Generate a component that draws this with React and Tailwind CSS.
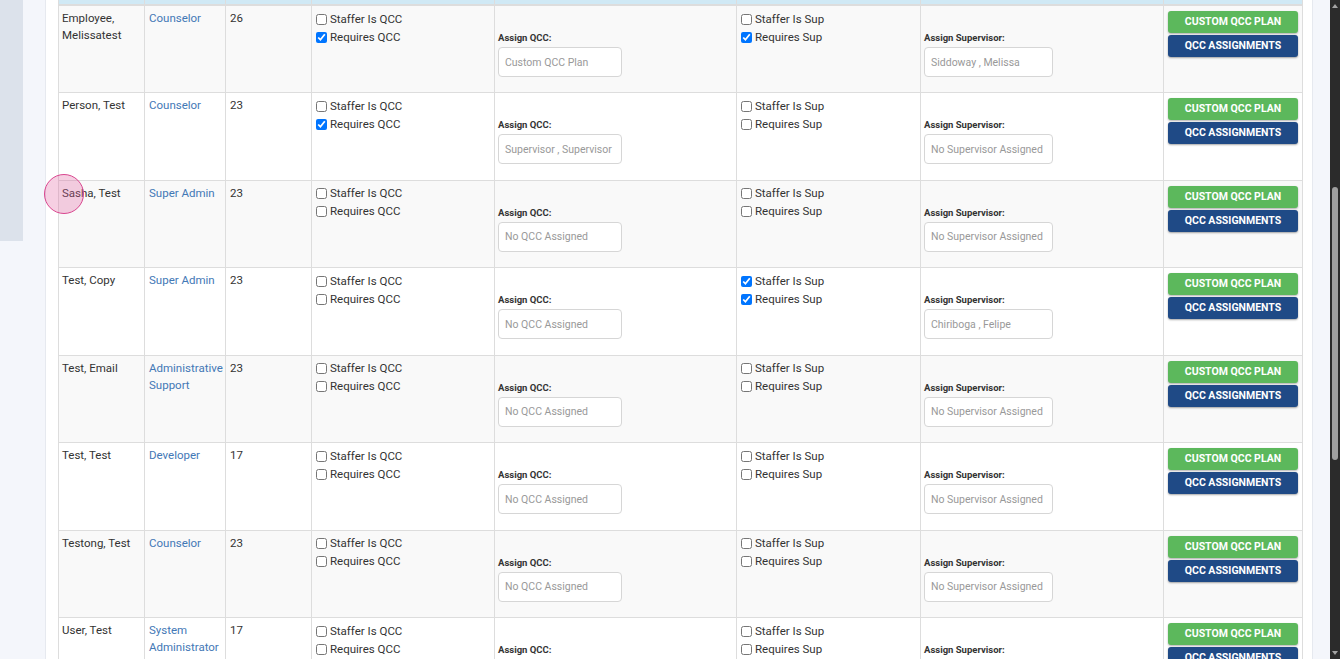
import React from 'react';

const rows = [
    { name: ['Employee,', 'Melissatest'], role: ['Counselor'], count: 26, isQcc: false, reqQcc: true, qcc: 'Custom QCC Plan', isSup: false, reqSup: true, sup: 'Siddoway , Melissa' },
    { name: ['Person, Test'], role: ['Counselor'], count: 23, isQcc: false, reqQcc: true, qcc: 'Supervisor , Supervisor', isSup: false, reqSup: false, sup: 'No Supervisor Assigned' },
    { name: ['Sasha, Test'], role: ['Super Admin'], count: 23, isQcc: false, reqQcc: false, qcc: 'No QCC Assigned', isSup: false, reqSup: false, sup: 'No Supervisor Assigned' },
    { name: ['Test, Copy'], role: ['Super Admin'], count: 23, isQcc: false, reqQcc: false, qcc: 'No QCC Assigned', isSup: true, reqSup: true, sup: 'Chiriboga , Felipe' },
    { name: ['Test, Email'], role: ['Administrative', 'Support'], count: 23, isQcc: false, reqQcc: false, qcc: 'No QCC Assigned', isSup: false, reqSup: false, sup: 'No Supervisor Assigned' },
    { name: ['Test, Test'], role: ['Developer'], count: 17, isQcc: false, reqQcc: false, qcc: 'No QCC Assigned', isSup: false, reqSup: false, sup: 'No Supervisor Assigned' },
    { name: ['Testong, Test'], role: ['Counselor'], count: 23, isQcc: false, reqQcc: false, qcc: 'No QCC Assigned', isSup: false, reqSup: false, sup: 'No Supervisor Assigned' },
    { name: ['User, Test'], role: ['System', 'Administrator'], count: 17, isQcc: false, reqQcc: false, qcc: 'No QCC Assigned', isSup: false, reqSup: false, sup: 'No Supervisor Assigned' },
];

const Check = ({ checked, label }) => (
    <label className="flex items-center h-[18px] text-[11.5px] leading-[17px] text-[#333]">
        <input type="checkbox" defaultChecked={checked} className="m-0 ml-[1px] mr-[3px] w-[11px] h-[11px]" />
        {label}
    </label>
);

const Assign = ({ label, value, width }) => (
    <div className="pt-[21px]">
        <div className="text-[9.5px] font-bold leading-[14px] text-[#333]">{label}</div>
        <input
            type="text"
            readOnly
            placeholder={value}
            className={`mt-[2px] h-[30px] ${width} rounded-[4px] border border-[#d6d6d6] bg-white px-[6px] text-[10.5px] text-[#999] placeholder:text-[#999] outline-none`}
        />
    </div>
);

const cell = 'border border-[#dddddd] pl-[3px] pr-[4px] pt-[4px] align-top';

const App = () => {
    return (
        <div className="relative flex h-[659px] w-[1340px] overflow-hidden bg-[#f4f6fb] font-['Roboto',sans-serif]">
            <div className="w-[23px] shrink-0">
                <div className="h-[241px] bg-[#dce2eb]" />
            </div>

            <div className="w-[22px] shrink-0" />

            <div className="w-[1268px] shrink-0 border-x border-[#e6e9ef] bg-white pl-[12px] pr-[10px]">
                <table className="w-[1244px] table-fixed border-collapse">
                    <colgroup>
                        <col className="w-[86px]" />
                        <col className="w-[81px]" />
                        <col className="w-[86px]" />
                        <col className="w-[183px]" />
                        <col className="w-[242px]" />
                        <col className="w-[184px]" />
                        <col className="w-[243px]" />
                        <col className="w-[139px]" />
                    </colgroup>
                    <thead>
                        <tr className="h-[5px] bg-[#d0e9f5]">
                            {[...Array(8)].map((_, i) => (
                                <th key={i} className="border-x border-b-2 border-[#dddddd] border-t-0 p-0" />
                            ))}
                        </tr>
                    </thead>
                    <tbody>
                        {rows.map((row, i) => (
                            <tr key={i} className={`h-[87.5px] ${i % 2 === 0 ? 'bg-[#f9f9f9]' : 'bg-white'}`}>
                                <td className={`${cell} text-[11.5px] leading-[17px] text-[#333]`}>
                                    {row.name.map((n) => <div key={n}>{n}</div>)}
                                </td>
                                <td className={`${cell} pl-[4px] text-[11.5px] leading-[17px] text-[#4378b6]`}>
                                    {row.role.map((r) => <div key={r}>{r}</div>)}
                                </td>
                                <td className={`${cell} pl-[4px] text-[11.5px] leading-[17px] text-[#333]`}>{row.count}</td>
                                <td className={cell}>
                                    <Check checked={row.isQcc} label="Staffer Is QCC" />
                                    <Check checked={row.reqQcc} label="Requires QCC" />
                                </td>
                                <td className={cell}>
                                    <Assign label="Assign QCC:" value={row.qcc} width="w-[124px]" />
                                </td>
                                <td className={cell}>
                                    <Check checked={row.isSup} label="Staffer Is Sup" />
                                    <Check checked={row.reqSup} label="Requires Sup" />
                                </td>
                                <td className={cell}>
                                    <Assign label="Assign Supervisor:" value={row.sup} width="w-[129px]" />
                                </td>
                                <td className={`${cell} pl-[4px]`}>
                                    <div className="flex flex-col gap-[2px] pt-[1px]">
                                        <button className="h-[22px] w-[130px] rounded-[3px] bg-[#5cb85c] text-[10.5px] font-bold text-white shadow-[0_1px_2px_rgba(0,0,0,0.3)]">
                                            CUSTOM QCC PLAN
                                        </button>
                                        <button className="h-[22px] w-[130px] rounded-[3px] bg-[#1f4a86] text-[10.5px] font-bold text-white shadow-[0_1px_2px_rgba(0,0,0,0.35)]">
                                            QCC ASSIGNMENTS
                                        </button>
                                    </div>
                                </td>
                            </tr>
                        ))}
                    </tbody>
                </table>
            </div>

            <div className="w-[17px] shrink-0" />

            {/* fake scrollbar */}
            <div className="flex w-[10px] shrink-0 flex-col items-center bg-[#2b2b2b]">
                <div className="mt-[4px] h-0 w-0 border-x-[3px] border-b-[4px] border-x-transparent border-b-[#a3a3a3]" />
                <div className="mt-[179px] h-[273px] w-[6px] rounded-[3px] bg-[#9f9f9f]" />
                <div className="flex-1" />
                <div className="mb-[4px] h-0 w-0 border-x-[3px] border-t-[4px] border-x-transparent border-t-[#a3a3a3]" />
            </div>

            {/* click highlight */}
            <div className="absolute left-[44px] top-[174px] h-[40px] w-[40px] rounded-full border-[1.5px] border-[#d9468f] bg-[rgba(226,95,160,0.3)]" />
        </div>
    );
};

export default App;
